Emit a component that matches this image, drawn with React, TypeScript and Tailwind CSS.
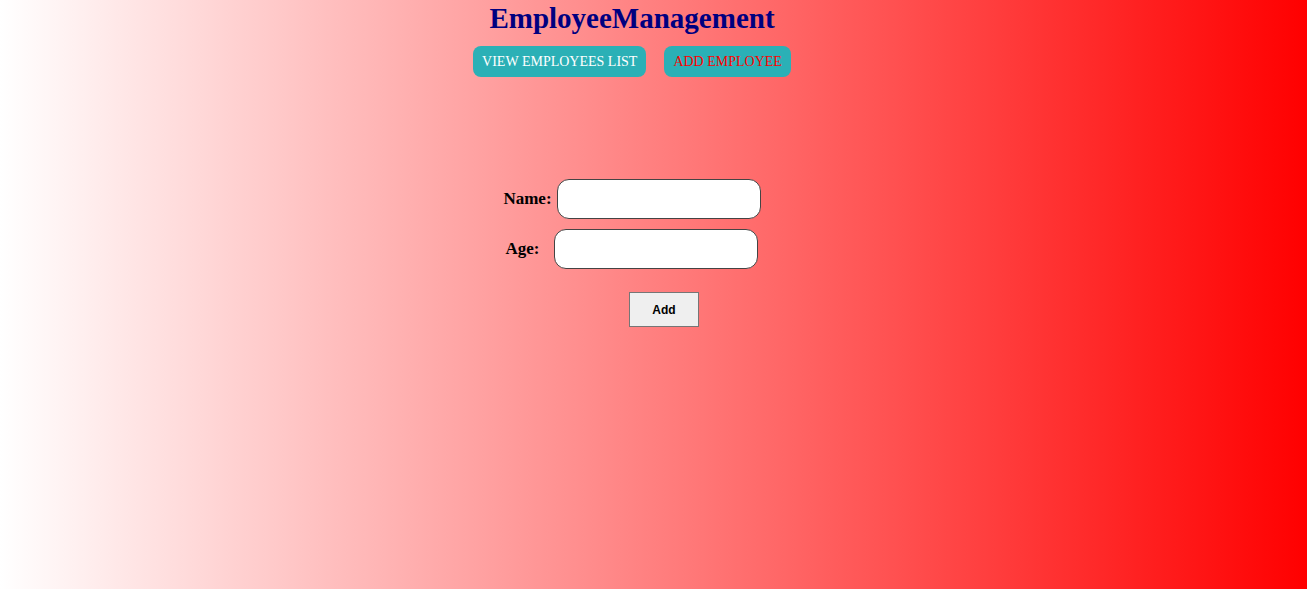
export default function App() {
  return (
    <div className="min-h-[589px] w-full bg-[linear-gradient(to_right,#ffffff,#ff0000)] font-['Liberation_Serif',serif]">
      <div className="flex flex-col items-center pr-[43px]">
        <h1 className="mt-[1px] text-[29px] font-bold leading-[34px] text-[#000080]">EmployeeManagement</h1>
        <div className="mt-[11px] flex gap-[18px]">
          <button className="h-[31px] rounded-[8px] bg-[#2bb0b6] px-[9px] text-[14px] text-white">VIEW EMPLOYEES LIST</button>
          <button className="h-[31px] rounded-[8px] bg-[#2bb0b6] px-[9px] text-[14px] text-[#ff0000]">ADD EMPLOYEE</button>
        </div>
        <form className="mt-[102px] flex flex-col items-center">
          <div className="flex items-center">
            <label className="mr-[5px] text-[17px] font-bold text-black">Name:</label>
            <input className="h-[40px] w-[204px] rounded-[12px] border border-[#444] bg-white" />
          </div>
          <div className="mt-[10px] flex items-center">
            <label className="mr-[15px] text-[17px] font-bold text-black">Age:</label>
            <input className="h-[40px] w-[204px] rounded-[12px] border border-[#444] bg-white" />
          </div>
          <button type="button" className="ml-[64px] mt-[23px] h-[35px] w-[70px] border border-[#767676] bg-[#efefef] font-['Liberation_Sans',sans-serif] text-[12px] font-bold text-black">Add</button>
        </form>
      </div>
    </div>
  );
}
